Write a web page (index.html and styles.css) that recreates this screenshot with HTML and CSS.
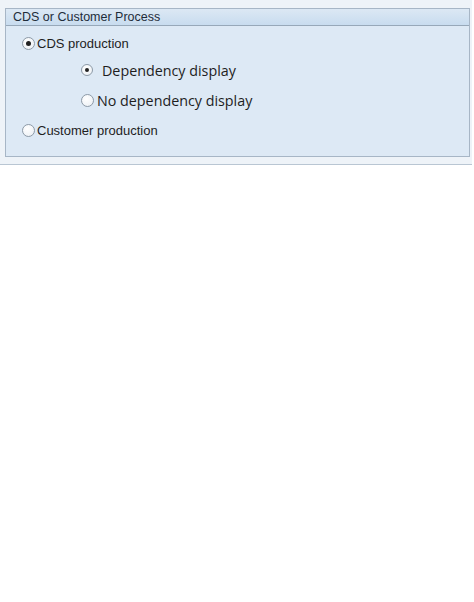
FILE: index.html
```
<!DOCTYPE html>
<html lang="en">
<head>
    <meta charset="utf-8">
    <title>CDS or Customer Process</title>
    <link rel="stylesheet" href="styles.css">
</head>
<body>

    <div class="screen-area">
        <fieldset class="group-box">
            <div class="group-title">CDS or Customer Process</div>

            <div class="group-body">
                <label class="option">
                    <span class="radio checked"></span>
                    <span class="option-text">CDS production</span>
                </label>

                <div class="sub-options">
                    <label class="option sub">
                        <span class="radio small checked"></span>
                        <span class="option-text">Dependency display</span>
                    </label>
                    <label class="option sub">
                        <span class="radio"></span>
                        <span class="option-text">No dependency display</span>
                    </label>
                </div>

                <label class="option tall">
                    <span class="radio"></span>
                    <span class="option-text">Customer production</span>
                </label>
            </div>
        </fieldset>
    </div>

</body>
</html>
```

FILE: styles.css
```
* {
    margin: 0;
    padding: 0;
    box-sizing: border-box;
}

body {
    font-family: 'Liberation Sans', Arial, sans-serif;
    background-color: #ffffff;
    color: #1e1e1e;
}

.screen-area {
    width: 472px;
    height: 165px;
    padding: 8px 2px 0 5px;
    background-color: #eef3f8;
    border-bottom: 1px solid #b9c6d3;
}

.group-box {
    border: 1px solid #a7b6c6;
    background-color: #dde9f5;
    height: 149px;
}

.group-title {
    height: 17px;
    padding: 1px 0 0 7px;
    font-size: 12.5px;
    line-height: 15px;
    color: #1f2d3a;
    background: linear-gradient(#dce8f4, #c8dcef);
    border-bottom: 1px solid #97a8b9;
}

.group-body {
    padding: 8px 0 0 16px;
}

.option {
    display: flex;
    align-items: center;
    height: 18px;
    font-size: 13px;
}

.option.tall {
    height: 30px;
}

.option-text {
    margin-left: 2px;
}

.sub-options {
    padding: 3px 0 0 59px;
    display: flex;
    flex-direction: column;
}

.option.sub {
    height: 30px;
    font-size: 14.3px;
    font-family: 'Open Sans', 'Liberation Sans', sans-serif;
}

.option.sub .option-text {
    margin-left: 3px;
}

.option.sub:first-child .option-text {
    margin-left: 9px;
}

.radio {
    width: 13px;
    height: 13px;
    border: 1px solid #8d9aa7;
    border-radius: 50%;
    background: radial-gradient(circle at 40% 35%, #ffffff, #e9eef3);
    display: flex;
    align-items: center;
    justify-content: center;
    flex-shrink: 0;
}

.radio.small {
    width: 12px;
    height: 12px;
}

.radio.checked::after {
    content: "";
    width: 5px;
    height: 5px;
    border-radius: 50%;
    background-color: #222;
}

.radio.small.checked::after {
    width: 4px;
    height: 4px;
}
```
